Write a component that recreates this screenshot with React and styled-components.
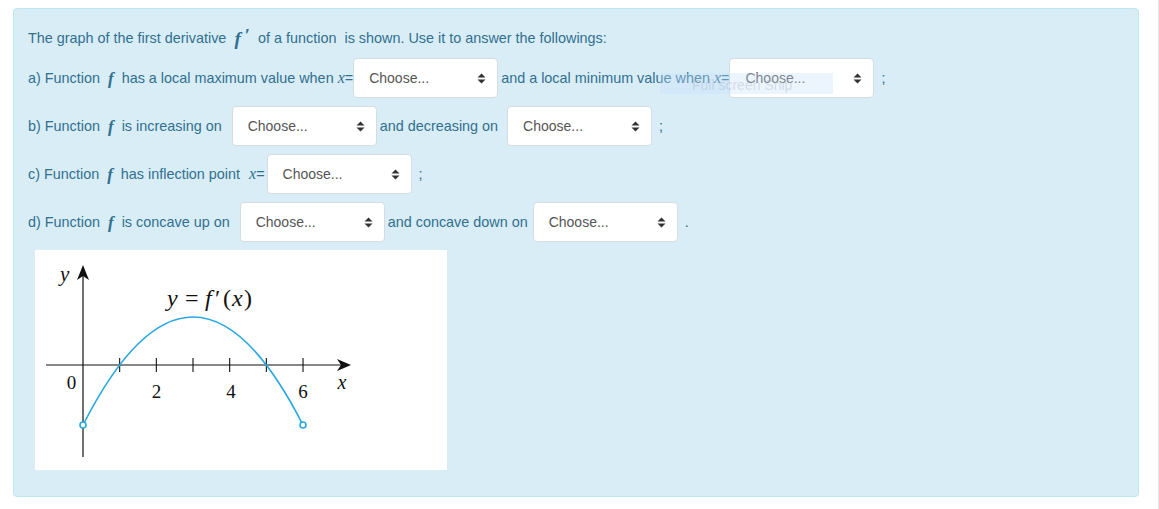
import React from "react";
import styled, { createGlobalStyle } from "styled-components";

const GlobalStyle = createGlobalStyle`
  body {
    margin: 0;
    background: #fff;
    font-family: "Liberation Sans", Arial, sans-serif;
  }
`;

const Page = styled.div`
  padding: 8px 0 12px 13px;
  border-right: 1px solid #e6e6e6;
  width: 1145px;
`;

const Panel = styled.div`
  position: relative;
  width: 1126px;
  box-sizing: border-box;
  padding: 19px 14px 26px;
  background: #d9edf7;
  border: 1px solid #bce8f1;
  border-radius: 4px;
  color: #31708f;
  font-size: 14.4px;
`;

const Intro = styled.p`
  margin: 0 0 10px;
  line-height: 20px;
  white-space: pre;
  display: flex;
  align-items: center;
`;

const Questions = styled.div`
  display: grid;
  grid-auto-rows: 40px;
  row-gap: 8px;
`;

const Row = styled.div`
  display: flex;
  align-items: center;
  white-space: pre;
`;

const Math = styled.span`
  font-family: "Liberation Serif", "Times New Roman", serif;
  font-style: italic;
  font-weight: ${(p) => (p.$bold ? 700 : 400)};
  font-size: ${(p) => p.$size || 17}px;
  margin: 0 ${(p) => p.$pad ?? 4}px 0 ${(p) => p.$left ?? p.$pad ?? 4}px;
  line-height: 1;
`;

const Prime = styled.span`
  font-style: normal;
  font-weight: 700;
  margin-left: 4px;
  position: relative;
  top: -3px;
`;

const SelectBox = styled.div`
  display: flex;
  align-items: center;
  justify-content: space-between;
  box-sizing: border-box;
  width: 145px;
  height: 40px;
  margin: 0 3px 0 ${(p) => p.$ml || 0}px;
  padding: 0 11px 0 15px;
  background: #fff;
  border: 1px solid #d5dde2;
  border-radius: 4px;
  color: #555;
  font-size: 14px;
`;

const Snip = styled.div`
  position: absolute;
  left: 646px;
  top: 64px;
  width: 173px;
  height: 21px;
  box-sizing: border-box;
  padding: 0 0 1px 32px;
  display: flex;
  align-items: flex-end;
  background: rgba(200, 226, 252, 0.35);
  color: rgba(160, 170, 180, 0.35);
  font-size: 14px;
  pointer-events: none;
`;

const Figure = styled.div`
  margin: 8px 0 0 7px;
  width: 412px;
  height: 220px;
  background: #fff;
`;

const Arrows = () => (
  <svg width="9" height="11" viewBox="0 0 9 11">
    <path d="M4.5 0.5 L8.5 4.5 H0.5 Z" fill="#333" />
    <path d="M4.5 10.5 L8.5 6.5 H0.5 Z" fill="#333" />
  </svg>
);

const Select = ({ ml }) => (
  <SelectBox $ml={ml}>
    <span>Choose...</span>
    <Arrows />
  </SelectBox>
);

const F = () => <Math $bold>f</Math>;
const X = ({ left = 0 }) => (
  <Math $size={16} $pad={0} $left={left}>
    x
  </Math>
);

const serif = '"Liberation Serif", "Times New Roman", serif';
const blue = "#29a8e0";

const Graph = () => {
  const ticks = [1, 2, 3, 4, 5, 6].map((k) => 48 + k * 36.67);
  return (
    <svg width="412" height="220" viewBox="0 0 412 220">
      <line x1="11" y1="115" x2="308" y2="115" stroke="#111" strokeWidth="1.2" />
      <path d="M302 109 L316 115 L302 121 L306 115 Z" fill="#111" />
      <line x1="48" y1="207" x2="48" y2="24" stroke="#111" strokeWidth="1.2" />
      <path d="M42 30 L48 15 L54 30 L48 26 Z" fill="#111" />
      {ticks.map((t) => (
        <line key={t} x1={t} y1="108" x2={t} y2="122" stroke="#111" strokeWidth="1.1" />
      ))}
      <path d="M48 175 Q158 -41 268 175" fill="none" stroke={blue} strokeWidth="1.6" />
      <circle cx="48" cy="175" r="3" fill="#fff" stroke={blue} strokeWidth="1.6" />
      <circle cx="268" cy="175" r="3" fill="#fff" stroke={blue} strokeWidth="1.6" />
      <g fontFamily={serif} fill="#111">
        <text x="25" y="31" fontSize="21" fontStyle="italic">y</text>
        <text y="56" fontSize="24">
          <tspan x="132" fontStyle="italic">y</tspan>
          <tspan x="150">=</tspan>
          <tspan x="170" fontStyle="italic">f</tspan>
          <tspan x="180">′</tspan>
          <tspan x="188">(</tspan>
          <tspan x="197" fontStyle="italic">x</tspan>
          <tspan x="209">)</tspan>
        </text>
        <text x="36.5" y="139" fontSize="19" textAnchor="middle">0</text>
        <text x="121.5" y="148" fontSize="19" textAnchor="middle">2</text>
        <text x="196" y="148" fontSize="19" textAnchor="middle">4</text>
        <text x="268" y="148" fontSize="19" textAnchor="middle">6</text>
        <text x="307" y="139" fontSize="20" fontStyle="italic" textAnchor="middle">x</text>
      </g>
    </svg>
  );
};

export default function App() {
  return (
    <Page>
      <GlobalStyle />
      <Panel>
        <Intro>
          The graph of the first derivative <Math $bold $size={19} $pad={4}>f<Prime>′</Prime></Math> of a function  is shown. Use it to answer the followings:
        </Intro>
        <Questions>
          <Row>
            a) Function <F /> has a local maximum value when <X />=
            <Select />
            and a local minimum value when <X />=
            <Select />
            {" ;"}
          </Row>
          <Row>
            b) Function <F /> is increasing on
            <Select ml={10} />
            and decreasing on
            <Select ml={9} />
            {" ;"}
          </Row>
          <Row>
            c) Function <F /> has inflection point <X left={5} />=
            <Select ml={2} />
            {" ;"}
          </Row>
          <Row>
            d) Function <F /> is concave up on
            <Select ml={10} />
            and concave down on
            <Select ml={5} />
            {" ."}
          </Row>
        </Questions>
        <Figure>
          <Graph />
        </Figure>
        <Snip>Full screen Snip</Snip>
      </Panel>
    </Page>
  );
}
